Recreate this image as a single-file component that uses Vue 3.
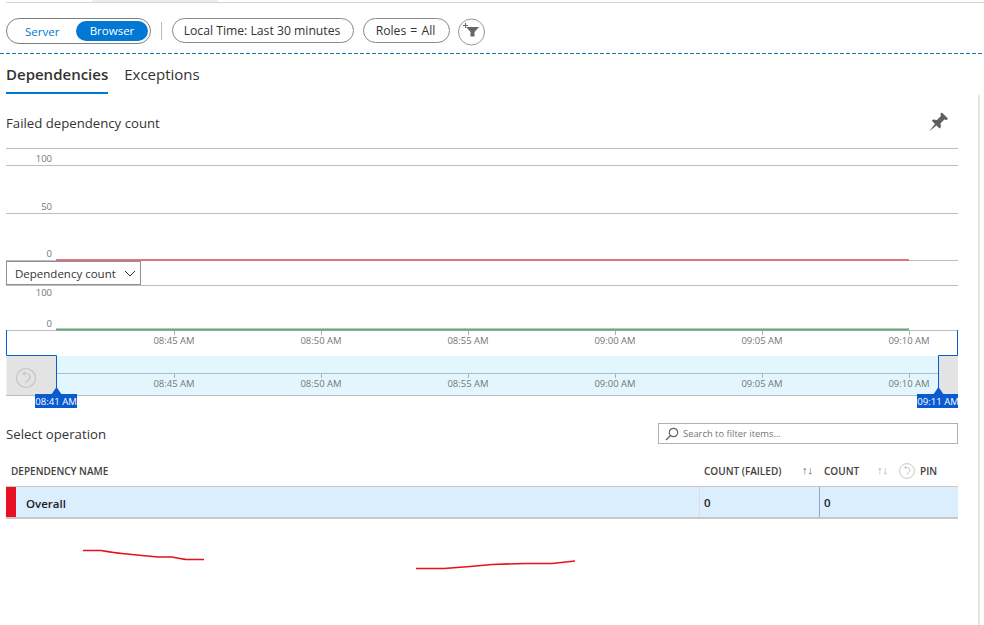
<template>
  <div class="page">
    <div class="topline"><span class="topline-tab"></span></div>

    <!-- toolbar -->
    <div class="toolbar">
      <div class="switch">
        <span class="switch-off">Server</span>
        <span class="switch-on">Browser</span>
      </div>
      <span class="sep"></span>
      <button class="pill time-pill">Local Time: Last 30 minutes</button>
      <button class="pill roles-pill">Roles = All</button>
      <button class="add-filter">
        <svg width="30" height="28" viewBox="0 0 30 28">
          <circle cx="14.500" cy="14" r="13" fill="none" stroke="#969696" stroke-width="1" />
          <path d="M6 7.500h5M8.500 5v5" stroke="#666" stroke-width="1" fill="none" />
          <path d="M9 9h13l-4.500 5v4.500h-4V14z" fill="#666" />
        </svg>
      </button>
    </div>

    <!-- tabs -->
    <div class="tabs">
      <span class="tab active">Dependencies</span>
      <span class="tab">Exceptions</span>
    </div>

    <div class="chart-head">
      <span>Failed dependency count</span>
      <svg class="pin" width="20" height="20" viewBox="0 0 20 20">
        <path d="M1 19.500l6-7.500-3.200-3.200 1.500-1.300 3.600.4 4-3.900-.4-2.500 1.400-1 6 6-1 1.400-2.600-.4-3.800 4 .4 3.600-1.300 1.500-3.200-3.200z" fill="#5f5f5f" />
      </svg>
    </div>

    <!-- both charts and the time brush -->
    <div class="charts">
      <svg width="984" height="262" viewBox="0 148 984 262">
        <path d="M6 148.500H958M6 165.500H958M6 213.500H958M6 260.500H56M909 260.500H958M6 285.500H958" stroke="#bdbdbd" />
        <path d="M56 260H909" stroke="#e0737b" stroke-width="2" />
        <g class="axis" text-anchor="end">
          <text x="52" y="162">100</text>
          <text x="52" y="210">50</text>
          <text x="52" y="257">0</text>
          <text x="52" y="296">100</text>
          <text x="52" y="327">0</text>
        </g>

        <!-- brush -->
        <rect x="56" y="356" width="882" height="39" fill="#e3f6fd" />
        <rect x="6.500" y="356" width="50" height="39" fill="#e3e3e3" />
        <rect x="938" y="356" width="20" height="39" fill="#e3e3e3" />
        <path d="M6 330.500H958M6 395.500H958" stroke="#bdbdbd" />
        <path d="M56 329.500H909" stroke="#66a47d" stroke-width="2" />
        <path d="M57 373.500H938" stroke="#a9bfca" />
        <path d="M6.500 330V355.500H56.500V388M957.500 330V355.500H938.500V388" fill="none" stroke="#0a5bd0" />
        <path d="M51 395l5.500-8 5.500 8zM933 395l5.500-8 5.500 8z" fill="#0a5bd0" />
        <g fill="none" stroke="#c4c4c4" stroke-width="1.200">
          <circle cx="26" cy="378" r="9.500" />
          <path d="M23 373.500h3.500a3.600 3.600 0 0 1 2 6.500l-3 2.500M23 373.500l2-1.800M23 373.500l2 1.800" />
        </g>
        <g v-for="tick in ticks" :key="tick.x">
          <path :d="`M${tick.x + 0.5} 331V335M${tick.x + 0.5} 374V378`" stroke="#a9b4b8" />
          <text class="tick" :x="tick.x" y="344" text-anchor="middle">{{ tick.label }}</text>
          <text class="tick" :x="tick.x" y="387" text-anchor="middle">{{ tick.label }}</text>
        </g>
        <rect x="35" y="394" width="42" height="14" fill="#0a5bd0" />
        <rect x="917" y="394" width="41" height="14" fill="#0a5bd0" />
        <text class="tag" x="56" y="405" text-anchor="middle">08:41 AM</text>
        <text class="tag" x="938" y="405" text-anchor="middle">09:11 AM</text>
      </svg>
      <div class="metric-select">
        <span>Dependency count</span>
        <svg width="12" height="7" viewBox="0 0 12 7"><path d="M1 1l5 5 5-5" fill="none" stroke="#333" stroke-width="1" /></svg>
      </div>
    </div>

    <!-- operation table -->
    <div class="select-row">
      <span class="select-label">Select operation</span>
      <div class="search">
        <svg width="14" height="14" viewBox="0 0 14 14">
          <circle cx="8.500" cy="5.500" r="4.200" fill="none" stroke="#666" stroke-width="1.200" />
          <path d="M5.500 8.500L1 13" stroke="#666" stroke-width="1.500" />
        </svg>
        <span>Search to filter items...</span>
      </div>
    </div>

    <div class="table-head">
      <span class="col-name">DEPENDENCY NAME</span>
      <span class="col-failed">COUNT (FAILED)</span>
      <span class="sort sort-dark">↑↓</span>
      <span class="col-count">COUNT</span>
      <span class="sort">↑↓</span>
      <svg class="reset" width="16" height="16" viewBox="0 0 16 16">
        <circle cx="8" cy="8" r="7.400" fill="none" stroke="#c8c8c8" />
        <path d="M5.500 4.500h3a2.600 2.600 0 0 1 1.300 4.800l-2.300 2M5.500 4.500l1.500-1.300M5.500 4.500l1.500 1.300" fill="none" stroke="#c8c8c8" />
      </svg>
      <span class="col-pin">PIN</span>
    </div>

    <div class="table-row">
      <span class="status"></span>
      <span class="row-name">Overall</span>
      <span class="row-failed">0</span>
      <span class="row-count">0</span>
    </div>

    <!-- hand drawn marks over the screenshot -->
    <svg class="scribble" width="984" height="625" viewBox="0 0 984 625">
      <path d="M83 550.500H101C110 552 116 553 122 553.500L142 555.500L158 557H172C178 558 184 559.500 188 559.500H204" />
      <path d="M416 568.500H444L470 566.500L492 564.500L525 563.500H552L575 561" />
    </svg>
    <div class="vline"></div>
  </div>
</template>

<script setup>
const ticks = [
  { x: 174, label: '08:45 AM' },
  { x: 321, label: '08:50 AM' },
  { x: 468, label: '08:55 AM' },
  { x: 615, label: '09:00 AM' },
  { x: 762, label: '09:05 AM' },
  { x: 909, label: '09:10 AM' },
]
</script>

<style>
html, body {
  margin: 0;
  background: #fff;
}
</style>

<style scoped>
.page {
  position: relative;
  width: 984px;
  height: 625px;
  overflow: hidden;
  background: #fff;
  color: #333;
  font-family: "Open Sans", "Noto Sans", sans-serif;
}

.topline {
  height: 2px;
  margin-left: 6px;
  border-bottom: 1px solid #d4d4d4;
  display: flex;
}

.topline-tab {
  margin-left: 86px;
  width: 126px;
  height: 2px;
  background: #eee;
}

.toolbar {
  height: 51px;
  box-sizing: border-box;
  padding: 15px 0 0 6px;
  display: flex;
  align-items: flex-start;
  background: repeating-linear-gradient(90deg, #1f7fae 0 4px, transparent 4px 6px) left bottom / 100% 1px no-repeat;
}

.switch {
  width: 145px;
  height: 26px;
  box-sizing: border-box;
  border: 1px solid #808080;
  border-radius: 13px;
  display: flex;
  align-items: center;
  font-size: 11.500px;
  padding: 2px;
  justify-content: space-between;
}

.switch-off {
  color: #0078d4;
  padding-left: 16px;
}

.switch-on {
  width: 72px;
  height: 20px;
  line-height: 20px;
  text-align: center;
  border-radius: 10px;
  background: #0078d4;
  color: #fff;
}

.sep {
  width: 1px;
  height: 18px;
  margin: 4px 10px 0 10px;
  background: #bbb;
}

.pill {
  height: 25px;
  box-sizing: border-box;
  border: 1px solid #8a8a8a;
  border-radius: 13px;
  background: #fff;
  color: #333;
  font-family: inherit;
  font-size: 12.200px;
  padding: 0;
  text-align: center;
}

.time-pill {
  width: 182px;
  padding-right: 2px;
}

.roles-pill {
  width: 87px;
  margin-left: 9px;
  word-spacing: 1px;
  padding-right: 2px;
}

.add-filter {
  border: 0;
  padding: 0;
  background: none;
  margin-left: 7px;
  height: 28px;
  width: 30px;
}

.tabs {
  height: 40px;
  box-sizing: border-box;
  padding-left: 6px;
  display: flex;
  gap: 16px;
  font-size: 15px;
}

.tab {
  height: 40px;
  box-sizing: border-box;
  padding-top: 10px;
}

.tab.active {
  font-weight: 600;
  border-bottom: 2px solid #0078d4;
}

.chart-head {
  height: 54px;
  box-sizing: border-box;
  padding: 20px 36px 0 6px;
  display: flex;
  justify-content: space-between;
  font-size: 13.200px;
}

.pin {
  margin-top: -2px;
}

.charts {
  position: relative;
  height: 262px;
}

.charts svg {
  display: block;
}

.axis {
  font-size: 9.500px;
  fill: #767676;
}

.tick {
  font-size: 9.500px;
  fill: #767676;
}

.tag {
  font-size: 9.600px;
  fill: #fff;
}

.metric-select {
  position: absolute;
  left: 6px;
  top: 113px;
  width: 135px;
  height: 24px;
  box-sizing: border-box;
  background: #fff;
  border: 1px solid #8f8f8f;
  padding: 0 4px 0 8px;
  display: flex;
  align-items: center;
  justify-content: space-between;
  font-size: 11.500px;
  white-space: nowrap;
}

.metric-select svg {
  flex: none;
}

.select-row {
  height: 52px;
  box-sizing: border-box;
  padding: 13px 26px 0 6px;
  display: flex;
  justify-content: space-between;
  font-size: 13.200px;
}

.select-label {
  padding-top: 2px;
}

.search {
  width: 300px;
  height: 21px;
  box-sizing: border-box;
  border: 1px solid #b0b0b0;
  display: flex;
  align-items: center;
  gap: 4px;
  padding-left: 6px;
  font-size: 9.400px;
  color: #767676;
}

.table-head {
  height: 24px;
  width: 952px;
  margin-left: 6px;
  padding-bottom: 6px;
  box-sizing: border-box;
  display: flex;
  align-items: center;
  font-size: 10px;
  font-weight: 600;
  color: #404040;
}

.col-name {
  margin-left: 5px;
  width: 693px;
}

.col-failed {
  width: 98px;
}

.sort {
  width: 22px;
  margin-bottom: 3px;
  color: #aaa;
  font-size: 11px;
  font-weight: 400;
}

.sort-dark {
  color: #555;
}

.col-count {
  width: 53px;
}

.reset {
  margin-left: 0;
  margin-right: 5px;
}

.table-row {
  width: 952px;
  height: 33px;
  margin-left: 6px;
  box-sizing: border-box;
  background: #dbeefd;
  border-top: 1px solid #c8c8c8;
  border-bottom: 2px solid #c8c8c8;
  display: flex;
  align-items: center;
  font-size: 11.500px;
  font-weight: 600;
  color: #222;
}

.status {
  width: 10px;
  height: 100%;
  background: #e81123;
}

.row-name {
  margin-left: 10px;
  width: 673px;
  padding-top: 2px;
}

.row-failed, .row-count {
  height: 100%;
  box-sizing: border-box;
  border-left: 1px solid #f0d4dc;
  padding: 8px 0 0 4px;
  width: 120px;
}

.row-count {
  border-left-color: #8aa9cc;
}

.scribble {
  position: absolute;
  left: 0;
  top: 0;
  pointer-events: none;
}

.scribble path {
  fill: none;
  stroke: #e8101c;
  stroke-width: 1.700;
  stroke-linejoin: round;
}

.vline {
  position: absolute;
  left: 978px;
  top: 95px;
  width: 2px;
  bottom: 0;
  background: #e6e6e6;
}
</style>
